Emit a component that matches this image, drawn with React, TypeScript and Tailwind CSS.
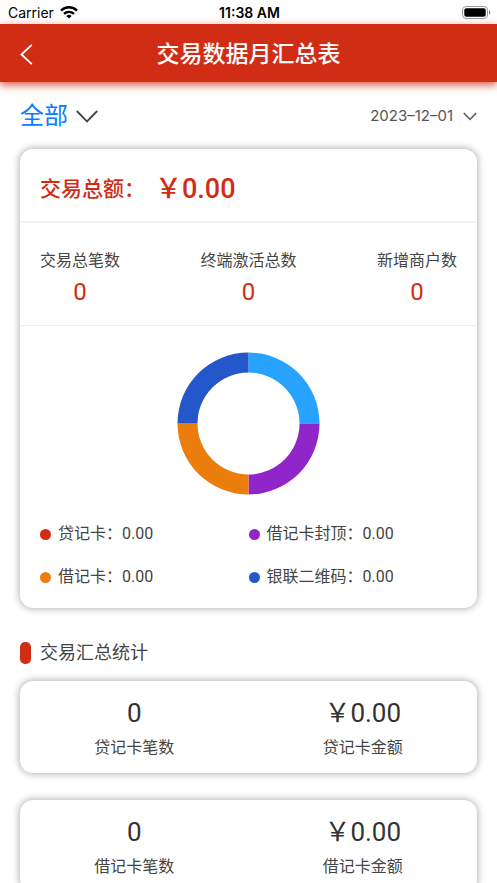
import type { ReactNode } from "react";

const summary = [
  { label: "交易总笔数", value: "0" },
  { label: "终端激活总数", value: "0" },
  { label: "新增商户数", value: "0" },
];

const segments = [
  { color: "#27a2ff", d: "M71.5 .5a71 71 0 0 1 71 71h-20a51 51 0 0 0-51-51z" },
  { color: "#9025ca", d: "M142.5 71.5a71 71 0 0 1-71 71v-20a51 51 0 0 0 51-51z" },
  { color: "#ea7d0c", d: "M71.5 142.5a71 71 0 0 1-71-71h20a51 51 0 0 0 51 51z" },
  { color: "#2457ca", d: "M.5 71.5a71 71 0 0 1 71-71v20a51 51 0 0 0-51 51z" },
];

const legend = [
  { label: "贷记卡", value: "0.00", dot: "bg-[#d12d15]" },
  { label: "借记卡封顶", value: "0.00", dot: "bg-[#9025ca]" },
  { label: "借记卡", value: "0.00", dot: "bg-[#ea7d0c]" },
  { label: "银联二维码", value: "0.00", dot: "bg-[#2457ca]" },
];

const stats = [
  { name: "贷记卡", count: "0", amount: "0.00" },
  { name: "借记卡", count: "0", amount: "0.00" },
];

function Card({ children }: { children: ReactNode }) {
  return (
    <section className="rounded-[13px] bg-white shadow-[0_0_7px_1px_rgba(0,0,0,0.3)]">
      {children}
    </section>
  );
}

function StatusBar() {
  return (
    <div className="grid h-6 grid-cols-3 items-center bg-white pt-0.5 pr-1.5 pl-2 font-[Inter,sans-serif] text-sm text-black">
      <div className="flex items-center gap-1.5">
        <span>Carrier</span>
        <svg width="18" height="14" viewBox="0 0 18 14" fill="none" stroke="currentColor" strokeWidth="2.4" aria-hidden="true">
          <path d="M1 4.6a11.4 11.4 0 0 1 16 0" />
          <path d="M4 7.9a7.1 7.1 0 0 1 10 0" />
          <path d="M9 12.6l-2.6-2.7a3.8 3.8 0 0 1 5.2 0z" fill="currentColor" stroke="none" />
        </svg>
      </div>
      <span className="text-center font-semibold">11:38 AM</span>
      <svg className="justify-self-end" width="29" height="14" viewBox="0 0 29 14" aria-hidden="true">
        <rect x="0.5" y="0.5" width="25" height="12" rx="3.6" fill="none" stroke="#999" />
        <rect x="2.3" y="2.3" width="21.4" height="8.4" rx="2" fill="#000" />
        <path d="M27 4.3a2.4 2.4 0 0 1 0 4.4z" fill="#888" />
      </svg>
    </div>
  );
}

function Header() {
  return (
    <header className="grid h-[58px] grid-cols-[48px_1fr_48px] items-center bg-[#d12d15] pt-[3px] text-white shadow-[0_3px_8px_rgba(209,45,21,0.8)]">
      <button type="button" aria-label="返回" className="flex h-full items-center pl-5">
        <svg width="13" height="21" viewBox="0 0 13 21" fill="none" stroke="currentColor" strokeWidth="1.8">
          <path d="M11.8 .8L1.4 10.5l10.4 9.7" />
        </svg>
      </button>
      <h1 className="text-center text-[23px] leading-8 font-medium">交易数据月汇总表</h1>
    </header>
  );
}

function Filters() {
  return (
    <div className="flex items-center justify-between px-5 pt-[18px] pb-[17px]">
      <button type="button" className="flex items-center gap-2 text-2xl leading-8 text-[#087cff]">
        全部
        <svg width="22" height="13" viewBox="0 0 22 13" fill="none" stroke="#444" strokeWidth="1.8" aria-hidden="true">
          <path d="M.8 1l10.2 10.4L21.2 1" />
        </svg>
      </button>
      <button type="button" className="flex items-center gap-2.5 font-[Inter,sans-serif] text-[15px] leading-8 text-[#555]">
        2023–12–01
        <svg width="14" height="9" viewBox="0 0 14 9" fill="none" stroke="currentColor" strokeWidth="1.5" aria-hidden="true">
          <path d="M.8 1L7 7.4 13.2 1" />
        </svg>
      </button>
    </div>
  );
}

function Overview() {
  return (
    <Card>
      <div className="flex h-[74px] items-center gap-2.5 border-b-2 border-[#f2f2f2] px-5 pt-[7px] font-medium text-[#d12d15]">
        <h2 className="text-[21px] leading-8">交易总额：</h2>
        <p className="text-[27px] leading-8">￥0.00</p>
      </div>
      <dl className="flex h-[103px] justify-between border-b border-[#ededed] px-5 pt-6 text-center">
        {summary.map((item) => (
          <div key={item.label}>
            <dt className="text-base leading-7 text-[#444]">{item.label}</dt>
            <dd className="text-2xl leading-[34px] text-[#d12d15]">{item.value}</dd>
          </div>
        ))}
      </dl>
      <svg className="mx-auto mt-[26px]" width="143" height="143" viewBox="0 0 143 143" role="img" aria-label="交易占比">
        {segments.map((s) => (
          <path key={s.color} d={s.d} fill={s.color} />
        ))}
      </svg>
      <ul className="grid grid-cols-2 gap-y-[19px] px-5 pt-[27px] pb-[19px]">
        {legend.map((item) => (
          <li key={item.label} className="flex items-center gap-[7px] text-base leading-6 text-[#444]">
            <span className={`size-[11px] rounded-full ${item.dot}`} />
            <span>{item.label}：{item.value}</span>
          </li>
        ))}
      </ul>
    </Card>
  );
}

export default function App() {
  return (
    <div className="min-h-screen bg-white font-[Roboto,'Noto_Sans_CJK_SC',sans-serif]">
      <StatusBar />
      <Header />
      <Filters />
      <main className="px-5 pb-6">
        <Overview />
        <h2 className="flex items-center gap-[9px] pt-[29px] pb-3 text-lg leading-8 text-[#444]">
          <span className="h-[22px] w-[11px] rounded-[5px] bg-[#d12d15]" />
          交易汇总统计
        </h2>
        <div className="flex flex-col gap-[27px]">
          {stats.map((item) => (
            <Card key={item.name}>
              <dl className="grid grid-cols-2 pt-3.5 pb-2 text-center">
                <div className="flex flex-col-reverse">
                  <dt className="text-base leading-[34px] text-[#444]">{item.name}笔数</dt>
                  <dd className="text-[26px] leading-9 text-[#333]">{item.count}</dd>
                </div>
                <div className="flex flex-col-reverse">
                  <dt className="text-base leading-[34px] text-[#444]">{item.name}金额</dt>
                  <dd className="text-[26px] leading-9 text-[#333]">￥{item.amount}</dd>
                </div>
              </dl>
            </Card>
          ))}
        </div>
      </main>
    </div>
  );
}
